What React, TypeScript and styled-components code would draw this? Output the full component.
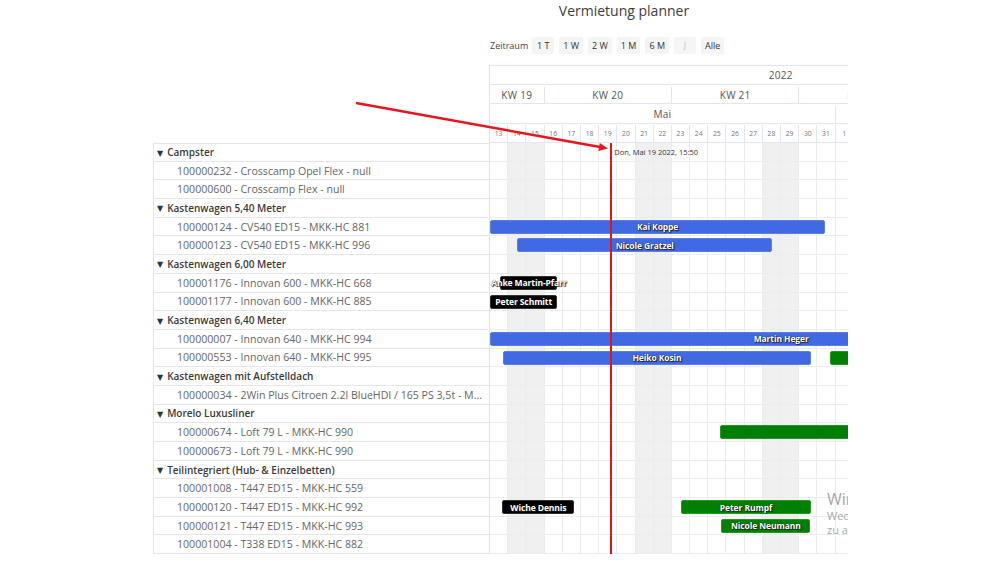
import * as React from 'react';
import styled, { createGlobalStyle } from 'styled-components';

const DAY = 18.2;
const DAYS = 32;
const ROW_H = 18.7;
const HEAD_H = 19.5;

const GlobalStyle = createGlobalStyle`
  body {
    margin: 0;
    background: #fff;
    font-family: "Open Sans", "DejaVu Sans", sans-serif;
  }
`;

const Viewport = styled.div`
  position: relative;
  width: 1000px;
  height: 563px;
  overflow: hidden;
  background: #fff;
`;

const Page = styled.div`
  position: relative;
  margin-left: 153px;
  width: 695px;
  height: 563px;
  overflow: hidden;
`;

const PageInner = styled.div`
  width: 942px;
`;

const Title = styled.h1`
  margin: 0;
  height: 24px;
  line-height: 22px;
  text-align: center;
  font-size: 14px;
  font-weight: 400;
  color: #3d3d3d;
`;

const Toolbar = styled.div`
  display: flex;
  align-items: center;
  gap: 5px;
  height: 17px;
  margin-top: 13px;
  padding-left: 337px;
`;

const ToolLabel = styled.span`
  font-size: 9px;
  color: #444;
  margin-right: -1px;
`;

const RangeButton = styled.button<{ $disabled?: boolean }>`
  height: 17px;
  min-width: 22px;
  padding: 0 4px;
  border: none;
  border-radius: 2px;
  background: #f5f5f5;
  font-family: inherit;
  font-size: 9px;
  color: ${(p) => (p.$disabled ? '#c4c4c4' : '#333')};
`;

const Chart = styled.div`
  display: flex;
  margin-top: 11px;
`;

const LeftPanel = styled.div`
  width: 336px;
  padding-top: ${HEAD_H * 4}px;
  flex-shrink: 0;
`;

const LeftRow = styled.div<{ $group?: boolean }>`
  display: flex;
  align-items: center;
  gap: 4px;
  height: ${ROW_H}px;
  box-sizing: border-box;
  border-left: 1px solid #e6e6e6;
  border-bottom: 1px solid #e6e6e6;
  padding-left: ${(p) => (p.$group ? '3px' : '23px')};
  font-size: ${(p) => (p.$group ? '10px' : '10.6px')};
  font-weight: ${(p) => (p.$group ? 600 : 400)};
  color: ${(p) => (p.$group ? '#3a3a3a' : '#666')};
  white-space: nowrap;
  overflow: hidden;
  &:first-child {
    border-top: 1px solid #e6e6e6;
  }
`;

const Caret = styled.span`
  font-size: 8px;
  color: #333;
`;

const RowText = styled.span`
  overflow: hidden;
  text-overflow: ellipsis;
  padding-right: 5px;
`;

const Timeline = styled.div`
  width: ${DAY * DAYS}px;
  flex-shrink: 0;
  border-left: 1px solid #e2e2e2;
  overflow: hidden;
`;

const HeaderRow = styled.div<{ $shift?: number }>`
  display: flex;
  height: ${HEAD_H}px;
  box-sizing: border-box;
  border-bottom: 1px solid #e1e6f0;
  padding-top: ${(p) => p.$shift || 0}px;
  &:first-child {
    border-top: 1px solid #e1e6f0;
  }
`;

const HeaderCell = styled.div<{ $small?: boolean }>`
  flex-shrink: 0;
  display: flex;
  align-items: center;
  justify-content: center;
  box-sizing: border-box;
  border-right: 1px solid #e1e6f0;
  font-size: ${(p) => (p.$small ? '6.8px' : '10px')};
  color: ${(p) => (p.$small ? '#777' : '#555')};
  letter-spacing: ${(p) => (p.$small ? '0' : '0.3px')};
  white-space: nowrap;
  overflow: hidden;
`;

const Body = styled.div`
  position: relative;
`;

const DayColumns = styled.div`
  position: absolute;
  inset: 0;
  display: flex;
`;

const DayCol = styled.div<{ $weekend?: boolean }>`
  width: ${DAY}px;
  flex-shrink: 0;
  box-sizing: border-box;
  border-right: 1px solid #ececec;
  background: ${(p) => (p.$weekend ? '#f0f0f0' : 'transparent')};
`;

const TimeRow = styled.div`
  position: relative;
  height: ${ROW_H}px;
  box-sizing: border-box;
  border-bottom: 1px solid #ececec;
`;

const barColors = {
  blue: { bg: '#4169e1', border: '#5b7fe8' },
  green: { bg: '#007f00', border: '#1f9a1f' },
  black: { bg: '#000', border: '#333' },
};

const Bar = styled.div<{ $color: keyof typeof barColors }>`
  position: absolute;
  top: 2px;
  height: 14px;
  box-sizing: border-box;
  border-radius: 2px;
  border: 1px solid ${(p) => barColors[p.$color].border};
  background: ${(p) => barColors[p.$color].bg};
  display: flex;
  align-items: center;
  justify-content: center;
  font-size: 8.5px;
  font-weight: 700;
  color: #fff;
  text-shadow: 0 0 1px #000, 1px 1px 1px #222;
  white-space: nowrap;
  letter-spacing: -0.1px;
`;

const TodayLine = styled.div`
  position: absolute;
  top: 0;
  bottom: 0;
  width: 2px;
  background: #e4141b;
`;

const TodayLabel = styled.span`
  position: absolute;
  top: 0;
  height: ${ROW_H}px;
  display: flex;
  align-items: center;
  font-size: 7.5px;
  color: #333;
  white-space: nowrap;
`;

const Watermark = styled.div`
  position: absolute;
  left: 674px;
  top: 489px;
  color: #a8a8a8;
  white-space: nowrap;
  pointer-events: none;
`;

const WatermarkTitle = styled.div`
  font-size: 16px;
  line-height: 20px;
`;

const WatermarkLine = styled.div`
  font-size: 11px;
  line-height: 14px;
`;

const Annotation = styled.svg`
  position: absolute;
  left: 0;
  top: 0;
  pointer-events: none;
`;

type BarData = { name: string; from: number; to: number; color: keyof typeof barColors };
type Item = { label: string; bars?: BarData[] };
type Group = { name: string; items: Item[] };

const groups: Group[] = [
  {
    name: 'Campster',
    items: [
      { label: '100000232 - Crosscamp Opel Flex - null' },
      { label: '100000600 - Crosscamp Flex - null' },
    ],
  },
  {
    name: 'Kastenwagen 5,40 Meter',
    items: [
      { label: '100000124 - CV540 ED15 - MKK-HC 881', bars: [{ name: 'Kai Koppe', from: -2, to: 18.42, color: 'blue' }] },
      { label: '100000123 - CV540 ED15 - MKK-HC 996', bars: [{ name: 'Nicole Gratzel', from: 1.5, to: 15.51, color: 'blue' }] },
    ],
  },
  {
    name: 'Kastenwagen 6,00 Meter',
    items: [
      { label: '100001176 - Innovan 600 - MKK-HC 668', bars: [{ name: 'Anke Martin-Pfarr', from: 0.57, to: 3.7, color: 'black' }] },
      { label: '100001177 - Innovan 600 - MKK-HC 885', bars: [{ name: 'Peter Schmitt', from: -1, to: 3.7, color: 'black' }] },
    ],
  },
  {
    name: 'Kastenwagen 6,40 Meter',
    items: [
      { label: '100000007 - Innovan 640 - MKK-HC 994', bars: [{ name: 'Martin Heger', from: -3, to: 40, color: 'blue' }] },
      {
        label: '100000553 - Innovan 640 - MKK-HC 995',
        bars: [
          { name: 'Heiko Kosin', from: 0.73, to: 17.62, color: 'blue' },
          { name: '', from: 18.7, to: 36, color: 'green' },
        ],
      },
    ],
  },
  {
    name: 'Kastenwagen mit Aufstelldach',
    items: [{ label: '100000034 - 2Win Plus Citroen 2.2l BlueHDI / 165 PS 3,5t - MKK-HC 771' }],
  },
  {
    name: 'Morelo Luxusliner',
    items: [
      { label: '100000674 - Loft 79 L - MKK-HC 990', bars: [{ name: '', from: 12.65, to: 40, color: 'green' }] },
      { label: '100000673 - Loft 79 L - MKK-HC 990' },
    ],
  },
  {
    name: 'Teilintegriert (Hub- & Einzelbetten)',
    items: [
      { label: '100001008 - T447 ED15 - MKK-HC 559' },
      {
        label: '100000120 - T447 ED15 - MKK-HC 992',
        bars: [
          { name: 'Wiche Dennis', from: 0.68, to: 4.64, color: 'black' },
          { name: 'Peter Rumpf', from: 10.51, to: 17.62, color: 'green' },
        ],
      },
      { label: '100000121 - T447 ED15 - MKK-HC 993', bars: [{ name: 'Nicole Neumann', from: 12.71, to: 17.6, color: 'green' }] },
      { label: '100001004 - T338 ED15 - MKK-HC 882' },
    ],
  },
];

// 13. Mai 2022 (Freitag) is the first visible day
const days = Array.from({ length: DAYS }, (_, i) => {
  const d = new Date(2022, 4, 13 + i);
  return { num: d.getDate(), weekend: d.getDay() === 0 || d.getDay() === 6 };
});

const weeks = [
  { label: 'KW 19', days: 3 },
  { label: 'KW 20', days: 7 },
  { label: 'KW 21', days: 7 },
  { label: 'KW 22', days: 7 },
  { label: 'KW 23', days: 7 },
  { label: 'KW 24', days: 1 },
];

const months = [
  { label: 'Mai', days: 19 },
  { label: 'Juni', days: 13 },
];

const ranges = ['1 T', '1 W', '2 W', '1 M', '6 M', 'J', 'Alle'];

// today: Do 19.05.2022 15:50
const TODAY = 6 + (15 + 50 / 60) / 24;

const TimeBars: React.FC<{ bars?: BarData[] }> = ({ bars }) => (
  <>
    {(bars || []).map((b, i) => {
      const from = Math.max(b.from, 0);
      const to = Math.min(b.to, DAYS);
      return (
        <Bar key={i} $color={b.color} style={{ left: from * DAY, width: (to - from) * DAY }}>
          {b.name}
        </Bar>
      );
    })}
  </>
);

export default function App() {
  const rows: { group?: string; item?: Item }[] = [];
  groups.forEach((g) => {
    rows.push({ group: g.name });
    g.items.forEach((item) => rows.push({ item }));
  });

  return (
    <Viewport>
      <GlobalStyle />
      <Page>
        <PageInner>
          <Title>Vermietung planner</Title>
          <Toolbar>
            <ToolLabel>Zeitraum</ToolLabel>
            {ranges.map((r) => (
              <RangeButton key={r} $disabled={r === 'J'}>
                {r}
              </RangeButton>
            ))}
          </Toolbar>
          <Chart>
            <LeftPanel>
              {rows.map((r, i) =>
                r.group ? (
                  <LeftRow key={i} $group>
                    <Caret>▼</Caret>
                    <RowText>{r.group}</RowText>
                  </LeftRow>
                ) : (
                  <LeftRow key={i}>
                    <RowText>{r.item!.label}</RowText>
                  </LeftRow>
                )
              )}
            </LeftPanel>
            <Timeline>
              <HeaderRow>
                <HeaderCell style={{ width: DAY * DAYS }}>2022</HeaderCell>
              </HeaderRow>
              <HeaderRow $shift={2}>
                {weeks.map((w) => (
                  <HeaderCell key={w.label} style={{ width: w.days * DAY }}>
                    {w.label}
                  </HeaderCell>
                ))}
              </HeaderRow>
              <HeaderRow $shift={2}>
                {months.map((m) => (
                  <HeaderCell key={m.label} style={{ width: m.days * DAY }}>
                    {m.label}
                  </HeaderCell>
                ))}
              </HeaderRow>
              <HeaderRow $shift={1.5}>
                {days.map((d, i) => (
                  <HeaderCell key={i} $small style={{ width: DAY }}>
                    {d.num}
                  </HeaderCell>
                ))}
              </HeaderRow>
              <Body>
                <DayColumns>
                  {days.map((d, i) => (
                    <DayCol key={i} $weekend={d.weekend} />
                  ))}
                </DayColumns>
                {rows.map((r, i) => (
                  <TimeRow key={i}>{r.item && <TimeBars bars={r.item.bars} />}</TimeRow>
                ))}
                <TodayLine style={{ left: TODAY * DAY - 1 }} />
                <TodayLabel style={{ left: TODAY * DAY + 3 }}>Don, Mai 19 2022, 15:50</TodayLabel>
              </Body>
            </Timeline>
          </Chart>
        </PageInner>
        <Watermark>
          <WatermarkTitle>Windows aktivieren</WatermarkTitle>
          <WatermarkLine>Wechseln Sie zu den Einstellungen, um Windows</WatermarkLine>
          <WatermarkLine>zu aktivieren.</WatermarkLine>
        </Watermark>
      </Page>
      <Annotation width="1000" height="563" viewBox="0 0 1000 563">
        <line x1="356" y1="103" x2="600" y2="147" stroke="#e8161c" strokeWidth="2.4" />
        <polygon points="608,148.5 598.4,151 599.8,142.9" fill="#e8161c" />
      </Annotation>
    </Viewport>
  );
}
